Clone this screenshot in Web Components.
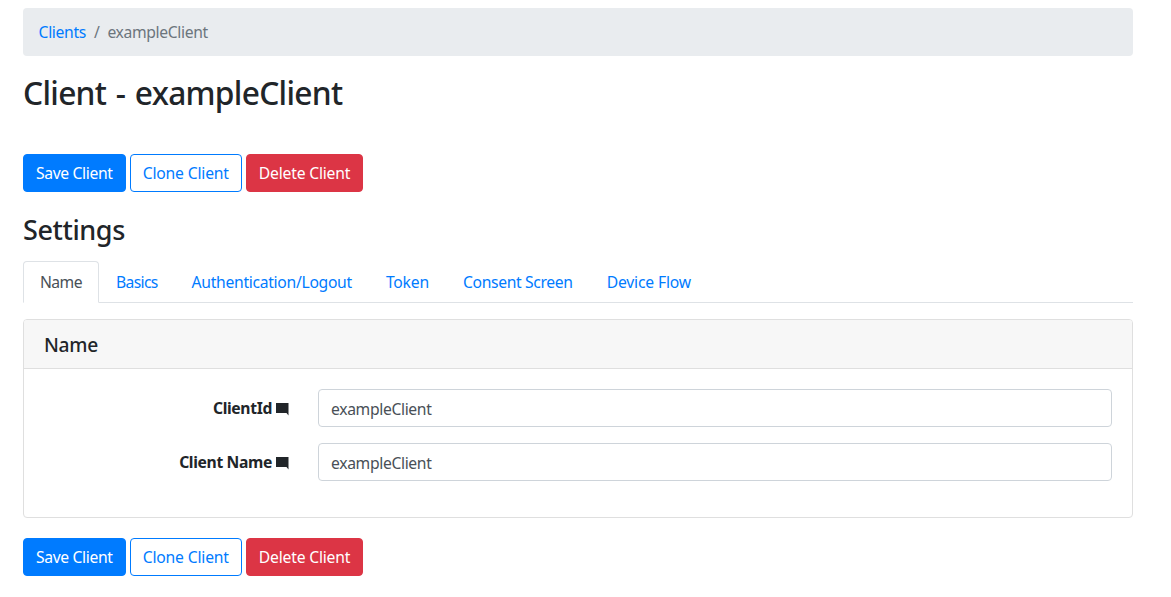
<!DOCTYPE html>
<html lang="en"><head><meta charset="utf-8"><title>Client - exampleClient</title>
<style>
html,body{margin:0;background:#fff}
body{font-family:"Noto Sans","Open Sans",sans-serif;font-size:15.7px;line-height:24px;color:#212529;letter-spacing:-.35px}
</style></head><body>
<client-page>
  <app-breadcrumb slot="crumbs" current="exampleClient"><a href="#">Clients</a></app-breadcrumb>
  <page-heading level="1">Client - exampleClient</page-heading>
  <action-bar style="margin-top:44px"></action-bar>
  <page-heading level="3" style="margin-top:20px">Settings</page-heading>
  <tab-bar style="margin-top:15px" active="Name" tabs="Name:-.55|Basics:-.68|Authentication/Logout:-.3|Token:-.2|Consent Screen:-.35|Device Flow:-.17"></tab-bar>
  <app-card style="margin-top:16px" heading="Name">
    <form-field label="ClientId" value="exampleClient"></form-field>
    <form-field label="Client Name" value="exampleClient"></form-field>
  </app-card>
  <action-bar style="margin-top:20px"></action-bar>
</client-page>
<script>
const def=(name,render)=>customElements.define(name,class extends HTMLElement{
  connectedCallback(){if(!this.shadowRoot){this.attachShadow({mode:'open'}).innerHTML=render(this)}}
});
def('client-page',()=>`<style>:host{display:block;width:1110px;margin-left:23px;padding-top:8px}</style><slot name="crumbs"></slot><slot></slot>`);
def('app-breadcrumb',el=>`<style>
:host{display:flex;height:48px;box-sizing:border-box;padding:12px 16px 12px 15.6px;background:#e9ecef;border-radius:4px;color:#6c757d}
::slotted(a){color:#007bff;text-decoration:none}
.s{padding:0 8px}
</style><slot></slot><span class="s">/</span><span>${el.getAttribute('current')}</span>`);
def('page-heading',el=>{const l=el.getAttribute('level');const h1=l==='1';
return `<style>:host{display:block;margin-top:${h1?'16px':'0'}}
h${l}{margin:0;padding-top:${h1?2:1}px;height:${h1?36:33}px;font-size:${h1?31.7:27}px;line-height:${h1?38:34}px;font-weight:500;letter-spacing:${h1?'-.7px':'-.4px'};word-spacing:${h1?'2px':'0'}}</style><h${l}><slot></slot></h${l}>`});
def('app-button',el=>{const v=el.getAttribute('variant');
const c={primary:'background:#007bff;border-color:#007bff;color:#fff;letter-spacing:-.35px',outline:'background:#fff;border-color:#007bff;color:#007bff;letter-spacing:-.18px',danger:'background:#dc3545;border-color:#dc3545;color:#fff;letter-spacing:-.2px'}[v];
return `<style>:host{display:inline-block}
button{font:inherit;height:38px;box-sizing:border-box;padding:6px 12px;border:1px solid;border-radius:4px;${c};display:block}</style><button type="button"><slot></slot></button>`});
def('action-bar',()=>`<style>:host{display:flex;gap:4px}</style>
<app-button variant="primary">Save Client</app-button><app-button variant="outline">Clone Client</app-button><app-button variant="danger">Delete Client</app-button>`);
def('tab-bar',el=>{const a=el.getAttribute('active');
return `<style>:host{display:flex;border-bottom:1px solid #dee2e6;height:42px;box-sizing:border-box}
a{display:block;box-sizing:border-box;height:42px;padding:8px 16px;margin-bottom:-1px;border:1px solid transparent;border-radius:4px 4px 0 0;color:#007bff;text-decoration:none}
a.on{color:#495057;background:#fff;border-color:#dee2e6 #dee2e6 #fff}</style>`+
el.getAttribute('tabs').split('|').map(s=>{const [t,k]=s.split(':');return `<a href="#" class="${t===a?'on':''}" style="letter-spacing:${k}px">${t}</a>`}).join('')});
def('app-card',el=>`<style>:host{display:block;border:1px solid #dfdfdf;border-radius:4px;overflow:hidden;height:199px;box-sizing:border-box}
header{height:49px;box-sizing:border-box;padding:13px 20px 11px;background:#f7f7f7;border-bottom:1px solid #dfdfdf}
h5{margin:0;font-size:19.2px;line-height:24px;font-weight:500;letter-spacing:-.3px}
.b{padding:20px 20px 0;display:flex;flex-direction:column;gap:16px}</style>
<header><h5>${el.getAttribute('heading')}</h5></header><div class="b"><slot></slot></div>`);
def('form-field',el=>`<style>:host{display:flex;height:38px}
label{width:245px;flex:none;display:flex;justify-content:flex-end;align-items:center;gap:4px;font-weight:700;height:38px}
svg{display:block;margin-top:1px}
.i{margin-left:29px;flex:1;box-sizing:border-box;height:38px;padding:7px 12px 5px;border:1px solid #ced4da;border-radius:4px;color:#495057;background:#fff}</style>
<label>${el.getAttribute('label')}<svg width="13" height="14" viewBox="0 0 13 14"><path fill="#212529" d="M0 1h12.500v12.500L10.500 11H0z"/></svg></label><div class="i">${el.getAttribute('value')}</div>`);
</script></body></html>
